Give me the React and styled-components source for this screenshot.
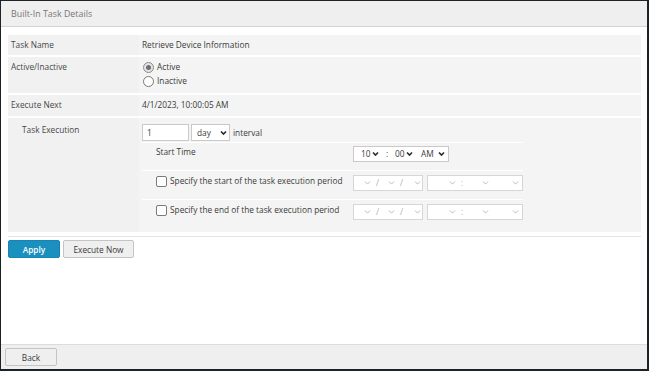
import React from 'react';
import styled, { createGlobalStyle } from 'styled-components';

const GlobalStyle = createGlobalStyle`
  html, body {
    margin: 0;
    padding: 0;
    background: #ffffff;
  }
  body {
    font-family: "Open Sans", "Noto Sans", sans-serif;
    font-size: 8.3px;
    color: #3a3a3a;
  }
`;

const Frame = styled.div`
  width: 649px;
  height: 371px;
  box-sizing: border-box;
  border-top: 1px solid #1d2226;
  border-left: 1px solid #1d2226;
  border-right: 2px solid #1d2226;
  border-bottom: 2px solid #1d2226;
  display: flex;
  flex-direction: column;
  background: #ffffff;
`;

const Header = styled.div`
  height: 26px;
  box-sizing: border-box;
  background: #efefef;
  border-bottom: 1px solid #d2d2d2;
  display: flex;
  align-items: center;
  padding-left: 10px;
  font-size: 8.9px;
  color: #777777;
`;

const Body = styled.div`
  flex: 1;
  padding: 8px 6px 0 7px;
`;

const Table = styled.div`
  display: flex;
  flex-direction: column;
  gap: 2px;
`;

const Row = styled.div`
  display: flex;
  min-height: ${(p) => p.$h || 20}px;
`;

const LabelCell = styled.div`
  width: 131px;
  flex-shrink: 0;
  box-sizing: border-box;
  background: #f1f1f1;
  padding: ${(p) => p.$top || 0}px 0 0 ${(p) => p.$indent || 3}px;
  line-height: ${(p) => (p.$top ? 14 : 20)}px;
  color: #474747;
`;

const ValueCell = styled.div`
  flex: 1;
  background: #f4f4f4;
  padding: ${(p) => p.$top || 0}px 0 ${(p) => p.$bottom || 0}px 3px;
  line-height: ${(p) => (p.$top ? 14 : 20)}px;
`;

const RadioLine = styled.label`
  display: flex;
  align-items: center;
  gap: 3px;
  height: 14px;
  margin-left: 1px;
`;

const RadioDot = styled.span`
  width: 11px;
  height: 11px;
  box-sizing: border-box;
  border-radius: 50%;
  border: 1px solid ${(p) => (p.$on ? '#8a8a8a' : '#777777')};
  background: ${(p) => (p.$on ? '#e4e4e4' : '#ffffff')};
  display: flex;
  align-items: center;
  justify-content: center;
  &::after {
    content: '';
    width: 5px;
    height: 5px;
    border-radius: 50%;
    background: ${(p) => (p.$on ? '#6f6f6f' : 'transparent')};
  }
`;

const InlineRow = styled.div`
  display: flex;
  align-items: center;
  height: 17px;
`;

const TextBox = styled.div`
  width: 47px;
  height: 17px;
  box-sizing: border-box;
  border: 1px solid #cacaca;
  background: #ffffff;
  padding-left: 4px;
  line-height: 15px;
`;

const SelectBox = styled.div`
  width: ${(p) => p.$w}px;
  height: ${(p) => p.$hgt || 17}px;
  margin-left: ${(p) => p.$ml || 0}px;
  box-sizing: border-box;
  border: 1px solid ${(p) => (p.$muted ? '#d6d6d6' : '#cacaca')};
  background: #ffffff;
  display: flex;
  align-items: center;
  position: relative;
  color: ${(p) => (p.$muted ? '#b0b0b0' : '#3a3a3a')};
  line-height: 14px;
`;

const Part = styled.span`
  position: absolute;
  left: ${(p) => p.$x}px;
  top: 50%;
  transform: translateY(-50%);
  display: flex;
  align-items: center;
`;

const Suffix = styled.span`
  margin-left: 3px;
`;

const SubTable = styled.div`
  width: 381px;
  margin-top: 1px;
  display: flex;
  flex-direction: column;
`;

const SubRow = styled.div`
  display: flex;
  height: ${(p) => p.$h}px;
  box-sizing: border-box;
  border-top: 1px solid #ffffff;
`;

const SubLabel = styled.div`
  width: 211px;
  flex-shrink: 0;
  box-sizing: border-box;
  padding: ${(p) => p.$top}px 0 0 14px;
  line-height: 14px;
  display: flex;
  align-items: flex-start;
  gap: 3px;
`;

const SubControl = styled.div`
  display: flex;
  gap: 4px;
  padding-top: ${(p) => p.$top}px;
`;

const CheckBox = styled.span`
  width: 11px;
  height: 11px;
  margin-top: 1.5px;
  flex-shrink: 0;
  box-sizing: border-box;
  border: 1px solid #7a7a7a;
  border-radius: 2px;
  background: #ffffff;
`;

const Divider = styled.div`
  height: 1px;
  background: #e3e3e3;
  margin-top: 4px;
`;

const ButtonBar = styled.div`
  display: flex;
  gap: 3px;
  padding-top: 3px;
`;

const Button = styled.button`
  height: 18px;
  width: ${(p) => p.$w}px;
  padding: 0;
  box-sizing: border-box;
  border-radius: 2px;
  font-family: "Open Sans", "Noto Sans", sans-serif;
  font-size: 8.3px;
  border: 1px solid ${(p) => (p.$primary ? '#1785b2' : '#c4c4c4')};
  background: ${(p) => (p.$primary ? '#1b8fbe' : '#efefef')};
  color: ${(p) => (p.$primary ? '#ffffff' : '#3a3a3a')};
  font-weight: ${(p) => (p.$primary ? 600 : 400)};
`;

const Footer = styled.div`
  height: 25px;
  box-sizing: border-box;
  border-top: 1px solid #dcdcdc;
  background: #efefef;
  padding: 3px 0 0 4px;
`;

const Chevron = ({ muted }) => (
  <svg width="7" height="5" viewBox="0 0 7 5">
    <polyline
      points="1,1 3.5,3.6 6,1"
      fill="none"
      stroke={muted ? '#b5b5b5' : '#2b2b2b'}
      strokeWidth={muted ? 0.9 : 1.6}
    />
  </svg>
);

const DateBox = () => (
  <SelectBox $w={70} $hgt={16} $muted>
    <Part $x={10}><Chevron muted /></Part>
    <Part $x={22}>/</Part>
    <Part $x={34}><Chevron muted /></Part>
    <Part $x={46}>/</Part>
    <Part $x={60}><Chevron muted /></Part>
  </SelectBox>
);

const TimeBox = () => (
  <SelectBox $w={96} $hgt={16} $muted>
    <Part $x={21}><Chevron muted /></Part>
    <Part $x={33}>:</Part>
    <Part $x={54}><Chevron muted /></Part>
    <Part $x={84}><Chevron muted /></Part>
  </SelectBox>
);

const App = () => (
  <>
    <GlobalStyle />
    <Frame>
      <Header>Built-In Task Details</Header>
      <Body>
        <Table>
          <Row $h={20}>
            <LabelCell>Task Name</LabelCell>
            <ValueCell>Retrieve Device Information</ValueCell>
          </Row>
          <Row $h={36}>
            <LabelCell $top={3}>Active/Inactive</LabelCell>
            <ValueCell $top={3}>
              <RadioLine><RadioDot $on />Active</RadioLine>
              <RadioLine><RadioDot />Inactive</RadioLine>
            </ValueCell>
          </Row>
          <Row $h={21}>
            <LabelCell>Execute Next</LabelCell>
            <ValueCell>4/1/2023, 10:00:05 AM</ValueCell>
          </Row>
          <Row $h={114}>
            <LabelCell $top={5} $indent={14}>Task Execution</LabelCell>
            <ValueCell $top={6} $bottom={5}>
              <InlineRow>
                <TextBox>1</TextBox>
                <SelectBox $w={39} $ml={2}>
                  <Part $x={5}>day</Part>
                  <Part $x={28}><Chevron /></Part>
                </SelectBox>
                <Suffix>interval</Suffix>
              </InlineRow>
              <SubTable>
                <SubRow $h={28}>
                  <SubLabel $top={2}>Start Time</SubLabel>
                  <SubControl $top={3}>
                    <SelectBox $w={96} $hgt={16}>
                      <Part $x={7}>10</Part>
                      <Part $x={18}><Chevron /></Part>
                      <Part $x={32}>:</Part>
                      <Part $x={41}>00</Part>
                      <Part $x={52}><Chevron /></Part>
                      <Part $x={67}>AM</Part>
                      <Part $x={84}><Chevron /></Part>
                    </SelectBox>
                  </SubControl>
                </SubRow>
                <SubRow $h={29}>
                  <SubLabel $top={3}>
                    <CheckBox />
                    Specify the start of the task execution period
                  </SubLabel>
                  <SubControl $top={4}>
                    <DateBox />
                    <TimeBox />
                  </SubControl>
                </SubRow>
                <SubRow $h={28}>
                  <SubLabel $top={3}>
                    <CheckBox />
                    Specify the end of the task execution period
                  </SubLabel>
                  <SubControl $top={4}>
                    <DateBox />
                    <TimeBox />
                  </SubControl>
                </SubRow>
              </SubTable>
            </ValueCell>
          </Row>
        </Table>
        <Divider />
        <ButtonBar>
          <Button $primary $w={52}>Apply</Button>
          <Button $w={71}>Execute Now</Button>
        </ButtonBar>
      </Body>
      <Footer>
        <Button $w={52}>Back</Button>
      </Footer>
    </Frame>
  </>
);

export default App;
